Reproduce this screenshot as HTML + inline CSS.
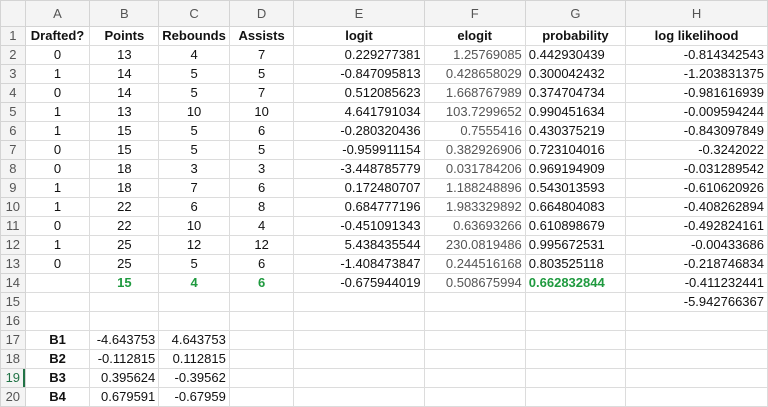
<!DOCTYPE html>
<html><head><style>
body{margin:0;width:768px;height:407px;overflow:hidden;background:#fff;font-family:"Liberation Sans",sans-serif;}
table{border-collapse:collapse;table-layout:fixed;position:absolute;left:0;top:0;}
td{height:18px;padding:0 3px;font-size:13px;color:#111;border:1px solid #dcdcdc;white-space:nowrap;overflow:hidden;text-align:right;line-height:18px}
tr.h td{height:25px;background:#f4f4f4;color:#555;text-align:center;border-color:#d4d4d4;font-size:13px}
td.r{background:#f4f4f4;color:#555;text-align:center;padding:0;border-color:#d4d4d4}
td.c{text-align:center}
td.b{font-weight:bold;text-align:center}
td.g{color:#1f9a3f;font-weight:bold;text-align:center}
td.f{color:#555}
td.gr{color:#1f9a3f;font-weight:bold}
td.sel{box-shadow:inset -2px 0 0 #217346}
</style></head><body>
<table>
<colgroup><col style="width:25px"><col style="width:65px"><col style="width:69px"><col style="width:65px"><col style="width:65px"><col style="width:132px"><col style="width:102px"><col style="width:101px"><col style="width:144px"></colgroup>
<tr class="h"><td></td><td>A</td><td>B</td><td>C</td><td>D</td><td>E</td><td>F</td><td>G</td><td>H</td></tr>
<tr><td class="r">1</td><td class="b">Drafted?</td><td class="b">Points</td><td class="b">Rebounds</td><td class="b">Assists</td><td class="b">logit</td><td class="b">elogit</td><td class="b">probability</td><td class="b">log likelihood</td></tr>
<tr><td class="r">2</td><td class="c">0</td><td class="c">13</td><td class="c">4</td><td class="c">7</td><td>0.229277381</td><td class="f">1.25769085</td><td style="text-align:left">0.442930439</td><td>-0.814342543</td></tr>
<tr><td class="r">3</td><td class="c">1</td><td class="c">14</td><td class="c">5</td><td class="c">5</td><td>-0.847095813</td><td class="f">0.428658029</td><td style="text-align:left">0.300042432</td><td>-1.203831375</td></tr>
<tr><td class="r">4</td><td class="c">0</td><td class="c">14</td><td class="c">5</td><td class="c">7</td><td>0.512085623</td><td class="f">1.668767989</td><td style="text-align:left">0.374704734</td><td>-0.981616939</td></tr>
<tr><td class="r">5</td><td class="c">1</td><td class="c">13</td><td class="c">10</td><td class="c">10</td><td>4.641791034</td><td class="f">103.7299652</td><td style="text-align:left">0.990451634</td><td>-0.009594244</td></tr>
<tr><td class="r">6</td><td class="c">1</td><td class="c">15</td><td class="c">5</td><td class="c">6</td><td>-0.280320436</td><td class="f">0.7555416</td><td style="text-align:left">0.430375219</td><td>-0.843097849</td></tr>
<tr><td class="r">7</td><td class="c">0</td><td class="c">15</td><td class="c">5</td><td class="c">5</td><td>-0.959911154</td><td class="f">0.382926906</td><td style="text-align:left">0.723104016</td><td>-0.3242022</td></tr>
<tr><td class="r">8</td><td class="c">0</td><td class="c">18</td><td class="c">3</td><td class="c">3</td><td>-3.448785779</td><td class="f">0.031784206</td><td style="text-align:left">0.969194909</td><td>-0.031289542</td></tr>
<tr><td class="r">9</td><td class="c">1</td><td class="c">18</td><td class="c">7</td><td class="c">6</td><td>0.172480707</td><td class="f">1.188248896</td><td style="text-align:left">0.543013593</td><td>-0.610620926</td></tr>
<tr><td class="r">10</td><td class="c">1</td><td class="c">22</td><td class="c">6</td><td class="c">8</td><td>0.684777196</td><td class="f">1.983329892</td><td style="text-align:left">0.664804083</td><td>-0.408262894</td></tr>
<tr><td class="r">11</td><td class="c">0</td><td class="c">22</td><td class="c">10</td><td class="c">4</td><td>-0.451091343</td><td class="f">0.63693266</td><td style="text-align:left">0.610898679</td><td>-0.492824161</td></tr>
<tr><td class="r">12</td><td class="c">1</td><td class="c">25</td><td class="c">12</td><td class="c">12</td><td>5.438435544</td><td class="f">230.0819486</td><td style="text-align:left">0.995672531</td><td>-0.00433686</td></tr>
<tr><td class="r">13</td><td class="c">0</td><td class="c">25</td><td class="c">5</td><td class="c">6</td><td>-1.408473847</td><td class="f">0.244516168</td><td style="text-align:left">0.803525118</td><td>-0.218746834</td></tr>
<tr><td class="r">14</td><td></td><td class="g">15</td><td class="g">4</td><td class="g">6</td><td>-0.675944019</td><td class="f">0.508675994</td><td class="gr" style="text-align:left">0.662832844</td><td>-0.411232441</td></tr>
<tr><td class="r">15</td><td></td><td></td><td></td><td></td><td></td><td></td><td></td><td>-5.942766367</td></tr>
<tr><td class="r">16</td><td></td><td></td><td></td><td></td><td></td><td></td><td></td><td></td></tr>
<tr><td class="r">17</td><td class="b">B1</td><td>-4.643753</td><td>4.643753</td><td></td><td></td><td></td><td></td><td></td></tr>
<tr><td class="r">18</td><td class="b">B2</td><td>-0.112815</td><td>0.112815</td><td></td><td></td><td></td><td></td><td></td></tr>
<tr><td class="r sel" style="color:#217346">19</td><td class="b">B3</td><td>0.395624</td><td>-0.39562</td><td></td><td></td><td></td><td></td><td></td></tr>
<tr><td class="r">20</td><td class="b">B4</td><td>0.679591</td><td>-0.67959</td><td></td><td></td><td></td><td></td><td></td></tr>
</table>
</body></html>
